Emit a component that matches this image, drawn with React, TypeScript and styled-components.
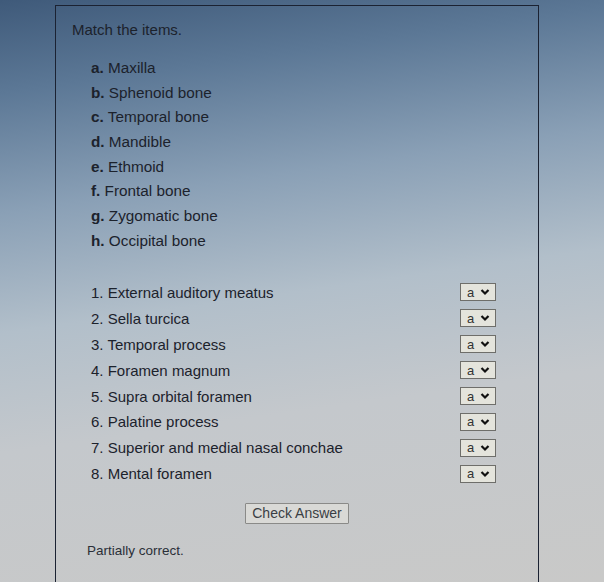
import React from "react";
import styled, { createGlobalStyle } from "styled-components";

const Global = createGlobalStyle`
  html, body { margin: 0; padding: 0; }
  body {
    width: 604px;
    height: 582px;
    overflow: hidden;
    font-family: "Liberation Sans", Arial, sans-serif;
    background: linear-gradient(172deg, #3f5a7a 0%, #5c7896 14%, #8aa0b6 32%, #b2bfca 50%, #c4c8cc 68%, #c9c9c8 100%);
  }
`;

const Panel = styled.div`
  margin: 5px 0 0 55px;
  width: 484px;
  height: 600px;
  border: 1px solid #1b2232;
  box-sizing: border-box;
  padding: 15px 42px 0 16px;
  color: #1c222c;
`;

const Title = styled.div`
  font-size: 15px;
  line-height: 18px;
  margin-bottom: 17px;
`;

const LetterList = styled.div`
  padding-left: 19px;
  display: flex;
  flex-direction: column;
`;

const LetterRow = styled.div`
  font-size: 15.3px;
  line-height: 24.7px;
  height: 24.7px;
`;

const Key = styled.b`
  font-weight: bold;
`;

const MatchList = styled.div`
  margin-top: 26px;
  padding-left: 19px;
  display: flex;
  flex-direction: column;
`;

const MatchRow = styled.div`
  display: flex;
  align-items: center;
  justify-content: space-between;
  height: 25.9px;
  font-size: 15px;
`;

const FakeSelect = styled.div`
  width: 36px;
  height: 18px;
  box-sizing: border-box;
  border: 1px solid #6e6e6a;
  background: #e4e4dc;
  display: flex;
  align-items: center;
  justify-content: space-between;
  padding: 0 5px 0 6px;
  font-size: 13px;
  color: #333;
`;

const Footer = styled.div`
  display: flex;
  justify-content: center;
  padding-left: 26px;
  margin-top: 16px;
`;

const Button = styled.button`
  width: 104px;
  height: 21px;
  border: 1px solid #8a8a88;
  background: #d9d9d6;
  font-family: "Liberation Sans", Arial, sans-serif;
  font-size: 14px;
  color: #3a3e44;
  padding: 0;
  border-radius: 1px;
`;

const Status = styled.div`
  margin-top: 19px;
  padding-left: 15px;
  font-size: 13.5px;
  color: #2a2f38;
`;

const Chevron = () => (
  <svg width="10" height="8" viewBox="0 0 10 8">
    <path d="M1.5 2 L5 5.5 L8.5 2" fill="none" stroke="#111" strokeWidth="2.2" />
  </svg>
);

const letters: [string, string][] = [
  ["a", "Maxilla"],
  ["b", "Sphenoid bone"],
  ["c", "Temporal bone"],
  ["d", "Mandible"],
  ["e", "Ethmoid"],
  ["f", "Frontal bone"],
  ["g", "Zygomatic bone"],
  ["h", "Occipital bone"],
];

const matches = [
  "External auditory meatus",
  "Sella turcica",
  "Temporal process",
  "Foramen magnum",
  "Supra orbital foramen",
  "Palatine process",
  "Superior and medial nasal conchae",
  "Mental foramen",
];

export default function App() {
  return (
    <>
      <Global />
      <Panel>
        <Title>Match the items.</Title>
        <LetterList>
          {letters.map(([k, v]) => (
            <LetterRow key={k}>
              <Key>{k}.</Key> {v}
            </LetterRow>
          ))}
        </LetterList>
        <MatchList>
          {matches.map((m, i) => (
            <MatchRow key={m}>
              <span>
                {i + 1}. {m}
              </span>
              <FakeSelect>
                <span>a</span>
                <Chevron />
              </FakeSelect>
            </MatchRow>
          ))}
        </MatchList>
        <Footer>
          <Button>Check Answer</Button>
        </Footer>
        <Status>Partially correct.</Status>
      </Panel>
    </>
  );
}
